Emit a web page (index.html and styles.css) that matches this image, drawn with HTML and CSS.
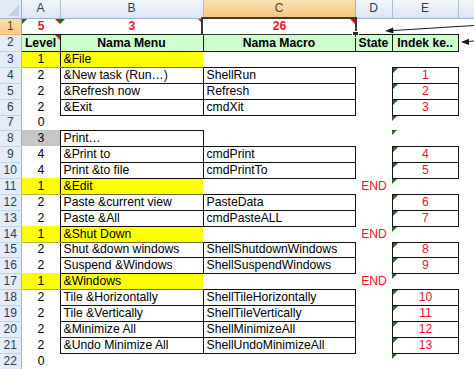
FILE: index.html
```html
<!DOCTYPE html>
<html>
<head>
<meta charset="utf-8">
<link rel="stylesheet" href="styles.css">
</head>
<body>
<div class="sheet">
<table class="grid">
<colgroup>
<col class="w-rh"><col class="w-a"><col class="w-b"><col class="w-c"><col class="w-d"><col class="w-e"><col class="w-f">
</colgroup>
<thead>
<tr class="hrow">
<th class="corner"><span class="corner-tri"></span></th>
<th class="ch">A</th><th class="ch">B</th><th class="ch ch-sel">C</th><th class="ch">D</th><th class="ch">E</th><th class="ch"></th>
</tr>
</thead>
<tbody>
<tr class="r1">
<th class="rh rh-sel">1</th>
<td class="num red b"><span class="tri g"></span><span class="tri r"></span>5</td>
<td class="num red b"><span class="tri g"></span><span class="tri r"></span>3</td>
<td class="num red b"><span class="tri r"></span><span class="sel-box"><span class="handle"></span></span>26</td>
<td></td><td></td><td></td>
</tr>
<tr class="r2">
<th class="rh">2</th>
<td class="hd num"><span class="tri r"></span>Level</td>
<td class="hd num">Nama Menu</td>
<td class="hd num">Nama Macro</td>
<td class="hd num">State</td>
<td class="hd num">Indek ke..</td>
<td></td>
</tr>
<tr><th class="rh">3</th><td class="num yel yel-a">1</td><td class="yel bl">&amp;File</td><td></td><td></td><td></td><td></td></tr>
<tr><th class="rh">4</th><td class="num">2</td><td class="bd">&amp;New task (Run…)</td><td class="bd">ShellRun</td><td></td><td class="bd num red"><span class="tri g"></span>1</td><td></td></tr>
<tr><th class="rh">5</th><td class="num">2</td><td class="bd">&amp;Refresh now</td><td class="bd">Refresh</td><td></td><td class="bd num red"><span class="tri g"></span>2</td><td></td></tr>
<tr><th class="rh">6</th><td class="num">2</td><td class="bd">&amp;Exit</td><td class="bd">cmdXit</td><td></td><td class="bd num red"><span class="tri g"></span>3</td><td></td></tr>
<tr class="short"><th class="rh">7</th><td class="num">0</td><td></td><td></td><td></td><td class="num"><span class="tri g"></span></td><td></td></tr>
<tr><th class="rh">8</th><td class="num gray">3</td><td class="bd">Print…</td><td></td><td></td><td class="num"><span class="tri g"></span></td><td></td></tr>
<tr><th class="rh">9</th><td class="num">4</td><td class="bd">&amp;Print to</td><td class="bd">cmdPrint</td><td></td><td class="bd num red"><span class="tri g"></span>4</td><td></td></tr>
<tr><th class="rh">10</th><td class="num">4</td><td class="bd">Print &amp;to file</td><td class="bd">cmdPrintTo</td><td></td><td class="bd num red"><span class="tri g"></span>5</td><td></td></tr>
<tr><th class="rh">11</th><td class="num yel yel-a">1</td><td class="yel bl">&amp;Edit</td><td></td><td class="num red">END</td><td class="num"><span class="tri g"></span></td><td></td></tr>
<tr><th class="rh">12</th><td class="num">2</td><td class="bd">Paste &amp;current view</td><td class="bd">PasteData</td><td></td><td class="bd num red"><span class="tri g"></span>6</td><td></td></tr>
<tr><th class="rh">13</th><td class="num">2</td><td class="bd">Paste &amp;All</td><td class="bd">cmdPasteALL</td><td></td><td class="bd num red"><span class="tri g"></span>7</td><td></td></tr>
<tr><th class="rh">14</th><td class="num yel yel-a">1</td><td class="yel bl">&amp;Shut Down</td><td></td><td class="num red">END</td><td class="num"><span class="tri g"></span></td><td></td></tr>
<tr class="short"><th class="rh">15</th><td class="num">2</td><td class="bd">Shut &amp;down windows</td><td class="bd">ShellShutdownWindows</td><td></td><td class="bd num red"><span class="tri g"></span>8</td><td></td></tr>
<tr><th class="rh">16</th><td class="num">2</td><td class="bd">Suspend &amp;Windows</td><td class="bd">ShellSuspendWindows</td><td></td><td class="bd num red"><span class="tri g"></span>9</td><td></td></tr>
<tr><th class="rh">17</th><td class="num yel yel-a">1</td><td class="yel bl">&amp;Windows</td><td></td><td class="num red">END</td><td class="num"><span class="tri g"></span></td><td></td></tr>
<tr><th class="rh">18</th><td class="num">2</td><td class="bd">Tile &amp;Horizontally</td><td class="bd">ShellTileHorizontally</td><td></td><td class="bd num red"><span class="tri g"></span>10</td><td></td></tr>
<tr><th class="rh">19</th><td class="num">2</td><td class="bd">Tile &amp;Vertically</td><td class="bd">ShellTileVertically</td><td></td><td class="bd num red"><span class="tri g"></span>11</td><td></td></tr>
<tr><th class="rh">20</th><td class="num">2</td><td class="bd">&amp;Minimize All</td><td class="bd">ShellMinimizeAll</td><td></td><td class="bd num red"><span class="tri g"></span>12</td><td></td></tr>
<tr><th class="rh">21</th><td class="num">2</td><td class="bd">&amp;Undo Minimize All</td><td class="bd">ShellUndoMinimizeAll</td><td></td><td class="bd num red"><span class="tri g"></span>13</td><td></td></tr>
<tr><th class="rh">22</th><td class="num">0</td><td></td><td></td><td></td><td class="num"><span class="tri g"></span></td><td></td></tr>
</tbody>
</table>
<svg class="arrows" width="474" height="60" viewBox="0 0 474 60">
<line x1="474" y1="25.5" x2="392" y2="30.6" stroke="#1a1a1a" stroke-width="1"/>
<polygon points="385,31 393,27.5 393.5,33.5" fill="#1a1a1a"/>
<line x1="474" y1="41" x2="468" y2="41.5" stroke="#1a1a1a" stroke-width="1"/>
<polygon points="461,42 469,38.8 469,45" fill="#1a1a1a"/>
</svg>
</div>
</body>
</html>
```

FILE: styles.css
```css
html, body {
  margin: 0;
  padding: 0;
  background: #ffffff;
  overflow: hidden;
}

.sheet {
  position: relative;
  width: 474px;
  height: 369px;
  overflow: hidden;
}

.grid {
  border-collapse: collapse;
  table-layout: fixed;
  width: 518px;
  font-family: "Liberation Sans", Arial, sans-serif;
  font-size: 12.2px;
  color: #000;
}

.w-rh { width: 21px; }
.w-a { width: 39px; }
.w-b { width: 143px; }
.w-c { width: 152px; }
.w-d { width: 37px; }
.w-e { width: 66px; }
.w-f { width: 60px; }

.grid tr { height: 16px; }
.grid tr.hrow { height: 18px; }
.grid tr.r1 { height: 16px; }
.grid tr.r2 { height: 17px; }
.grid tr.short { height: 15px; }

.grid td {
  position: relative;
  padding: 0 2px 1px 3px;
  line-height: 13px;
  white-space: nowrap;
  overflow: visible;
  vertical-align: bottom;
}

.grid th {
  font-weight: normal;
  padding: 0;
  line-height: 13px;
  color: #27405f;
}

.grid .ch {
  background: linear-gradient(#f2f6fb, #dbe5f2);
  border-right: 1px solid #a9bcd4;
  border-bottom: 1px solid #9eb3cc;
  text-align: center;
  vertical-align: middle;
  font-size: 12px;
}

.grid .ch-sel {
  background: linear-gradient(#fbe3b5, #f5c57c);
  border-right: 1px solid #e2a451;
  border-bottom: 1px solid #e39a3a;
  color: #5a4020;
}

.grid .corner {
  position: relative;
  background: #e3eaf4;
  border-right: 1px solid #9eb3cc;
  border-bottom: 1px solid #9eb3cc;
}

.corner-tri {
  position: absolute;
  right: 2px;
  bottom: 2px;
  width: 0;
  height: 0;
  border-left: 11px solid transparent;
  border-bottom: 11px solid #c3d1e3;
}

.grid .rh {
  background: #e4ecf7;
  border-right: 1px solid #9eb3cc;
  border-bottom: 1px solid #c3d2e4;
  text-align: center;
  vertical-align: middle;
  font-size: 12px;
}

.grid .rh-sel {
  background: linear-gradient(#fbdfae, #f6c98a);
  border-bottom: 1px solid #e8b06a;
  border-right: 1px solid #e39a3a;
  color: #5a4020;
}

.grid .num { text-align: center; }
.grid .b { font-weight: bold; }
.grid .red { color: #f0142d; }

.grid .hd {
  background: #ccffcc;
  border: 1px solid #1a1a1a;
  font-weight: bold;
  padding: 0 1px 1px 1px;
}

.grid .bd { border: 1px solid #111111; }
.grid .bl { border-left: 1px solid #111111; }

.grid .yel { background: #ffff00; }
.grid .yel-a { border-bottom: 1px solid #b5b54a; }
.grid .yel.bl { border-bottom: 1px solid #6e6e2a; }

.grid .gray { background: #c6c6c6; }

.tri {
  position: absolute;
  top: 0;
  width: 0;
  height: 0;
}

.tri.g {
  left: 0;
  border-top: 5px solid #1d6a1d;
  border-right: 5px solid transparent;
}

.tri.r {
  right: 0;
  border-top: 5px solid #e0101e;
  border-left: 5px solid transparent;
}

.sel-box {
  position: absolute;
  left: -2px;
  top: -2px;
  right: -2px;
  bottom: -2px;
  border: 2px solid #3a3a3a;
  box-sizing: border-box;
}

.handle {
  position: absolute;
  right: -4px;
  bottom: -4px;
  width: 5px;
  height: 5px;
  background: #2a2a2a;
  border: 1px solid #ffffff;
}

.arrows {
  position: absolute;
  left: 0;
  top: 0;
  pointer-events: none;
}
```
